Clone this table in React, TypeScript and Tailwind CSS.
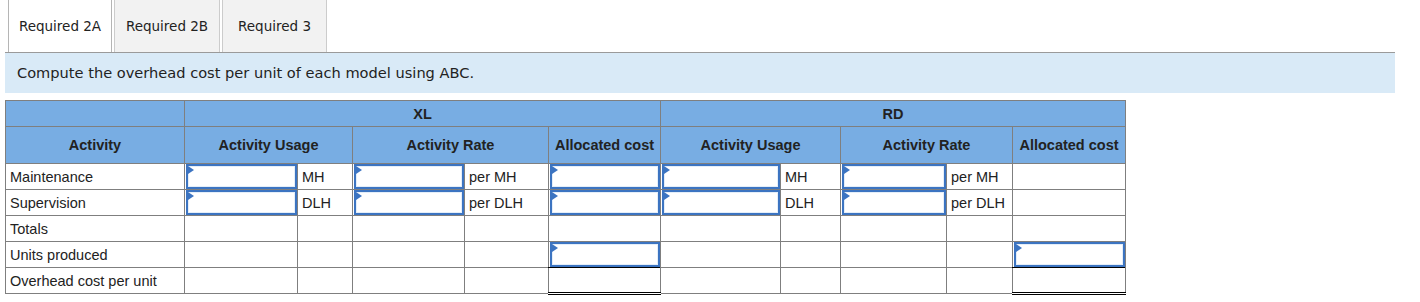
import React from "react";

const B = "border border-[#7f7f7f]";

function Inp() {
  return (
    <div className="relative h-[25px] w-full border-2 border-[#3c74c1] shadow-[inset_0_0_0_1px_#e4eef9] bg-white">
      <span className="absolute left-0 top-0 h-0 w-0 border-y-[4px] border-y-transparent border-l-[6px] border-l-[#3c74c1]" />
    </div>
  );
}

function TdIn({ cls = "" }: { cls?: string }) {
  return (
    <td className={`${B} p-0 pl-px align-top ${cls}`}>
      <Inp />
    </td>
  );
}

function TdTxt({ t = "", cls = "" }: { t?: string; cls?: string }) {
  return <td className={`${B} px-[4px] pt-[2px] pb-0 text-left align-middle ${cls}`}>{t}</td>;
}

export default function App() {
  const widths = [179, 113, 55, 112, 84, 112, 120, 60, 106, 66, 113];
  const H = `${B} text-center pt-[2px] pb-0`;
  return (
    <div className="w-[1420px] h-[302px] bg-white pl-[5px]">
      <div className="w-[1390px] flex items-stretch h-[53px] border-b border-[#9a9a9a] pl-[3px] gap-[2px] font-['DejaVu_Sans',sans-serif] text-[13.5px] text-[#222]">
        <div className="w-[104px] bg-white border-x border-[#b5b5b5] flex items-center justify-center pt-[1px]">Required 2A</div>
        <div className="w-[106px] bg-[#f2f2f2] border-x border-[#cccccc] flex items-center justify-center pt-[1px]">Required 2B</div>
        <div className="w-[105px] bg-[#f2f2f2] border-x border-[#cccccc] flex items-center justify-center pt-[1px]">Required 3</div>
      </div>
      <div className="w-[1390px] h-[40px] bg-[#d9eaf7] flex items-center pl-[12px] font-['DejaVu_Sans',sans-serif] text-[14.6px] text-[#222]">
        Compute the overhead cost per unit of each model using ABC.
      </div>
      <table className="mt-[7px] border-collapse table-fixed w-[1121px] font-['Liberation_Sans',Arial,sans-serif] text-[14.5px] text-[#222]">
        <colgroup>
          {widths.map((w, i) => (
            <col key={i} style={{ width: w }} />
          ))}
        </colgroup>
        <thead>
          <tr className="h-[26px] bg-[#78ade3] font-bold">
            <th className={B}></th>
            <th className={H} colSpan={5}>XL</th>
            <th className={H} colSpan={5}>RD</th>
          </tr>
          <tr className="h-[37px] bg-[#78ade3] font-bold">
            <th className={H}>Activity</th>
            <th className={H} colSpan={2}>Activity Usage</th>
            <th className={H} colSpan={2}>Activity Rate</th>
            <th className={H}>Allocated cost</th>
            <th className={H} colSpan={2}>Activity Usage</th>
            <th className={H} colSpan={2}>Activity Rate</th>
            <th className={H}>Allocated cost</th>
          </tr>
        </thead>
        <tbody>
          <tr className="h-[26px]">
            <TdTxt t="Maintenance" />
            <TdIn />
            <TdTxt t="MH" />
            <TdIn />
            <TdTxt t="per MH" />
            <TdIn />
            <TdIn />
            <TdTxt t="MH" />
            <TdIn />
            <TdTxt t="per MH" />
            <TdTxt />
          </tr>
          <tr className="h-[26px]">
            <TdTxt t="Supervision" />
            <TdIn />
            <TdTxt t="DLH" />
            <TdIn />
            <TdTxt t="per DLH" />
            <TdIn />
            <TdIn />
            <TdTxt t="DLH" />
            <TdIn />
            <TdTxt t="per DLH" />
            <TdTxt />
          </tr>
          <tr className="h-[26px]">
            <TdTxt t="Totals" />
            <TdTxt />
            <TdTxt />
            <TdTxt />
            <TdTxt />
            <TdTxt />
            <TdTxt />
            <TdTxt />
            <TdTxt />
            <TdTxt />
            <TdTxt />
          </tr>
          <tr className="h-[26px]">
            <TdTxt t="Units produced" />
            <TdTxt />
            <TdTxt />
            <TdTxt />
            <TdTxt />
            <TdIn cls="border-b-black" />
            <TdTxt />
            <TdTxt />
            <TdTxt />
            <TdTxt />
            <TdIn cls="border-b-black" />
          </tr>
          <tr className="h-[26px]">
            <TdTxt t="Overhead cost per unit" />
            <TdTxt />
            <TdTxt />
            <TdTxt />
            <TdTxt />
            <TdTxt cls="border-t-black border-b-[3px] border-b-black border-double" />
            <TdTxt />
            <TdTxt />
            <TdTxt />
            <TdTxt />
            <TdTxt cls="border-t-black border-b-[3px] border-b-black border-double" />
          </tr>
        </tbody>
      </table>
    </div>
  );
}
